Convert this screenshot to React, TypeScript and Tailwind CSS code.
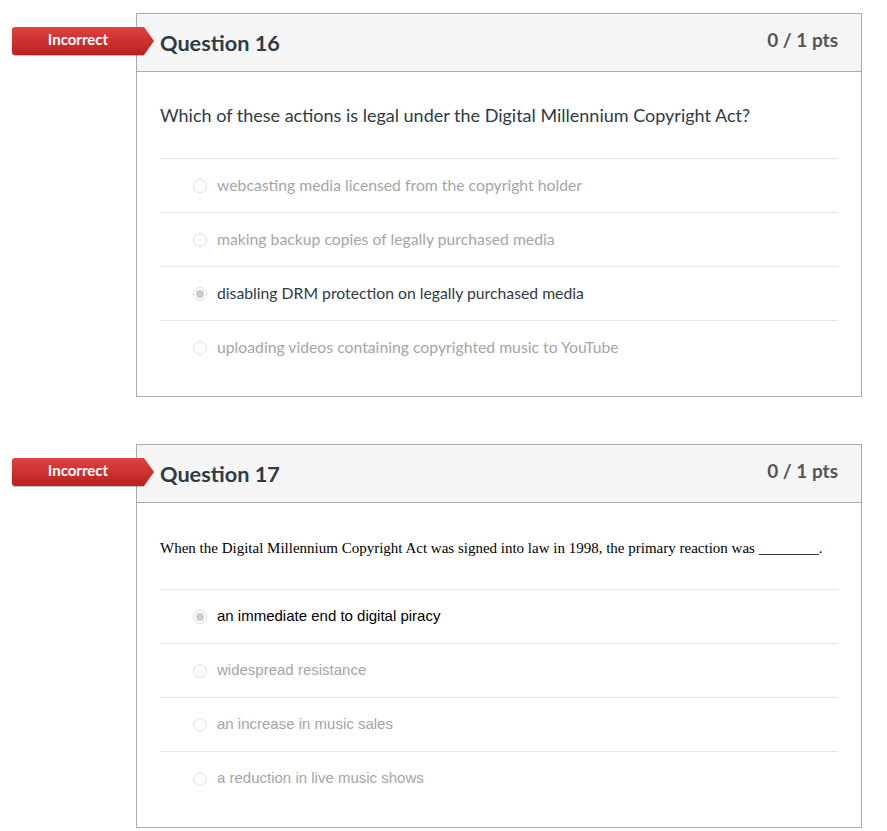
import React from "react";

interface Answer {
  text: string;
  selected?: boolean;
}

interface QuestionProps {
  num: number;
  prompt: string;
  serif?: boolean;
  answers: Answer[];
}

function Radio({ selected }: { selected?: boolean }) {
  return (
    <span className="flex h-[14px] w-[14px] shrink-0 items-center justify-center rounded-full border border-[#e0e0e0] bg-[#fdfdfd]">
      {selected && <span className="h-[8px] w-[8px] rounded-full bg-[#cccccc]" />}
    </span>
  );
}

function Badge() {
  return (
    <div className="absolute left-[12px] top-[14px] flex h-[28px] items-center">
      <div className="flex h-full w-[132px] items-center justify-center rounded-l-[3px] bg-gradient-to-b from-[#e0413f] to-[#b8211f] pb-[3px] font-['Lato'] text-[15px] font-bold text-white shadow-[0_1px_1px_rgba(0,0,0,0.25)]">
        Incorrect
      </div>
      <div className="h-full w-[10px] bg-gradient-to-b from-[#e0413f] to-[#b8211f] [clip-path:polygon(0_0,100%_50%,0_100%)]" />
    </div>
  );
}

function Question({ num, prompt, serif, answers }: QuestionProps) {
  return (
    <div className="relative">
      <Badge />
      <div className="ml-[136px] w-[726px] border border-[#aaaaaa] bg-white">
        <div className="flex h-[58px] items-start justify-between border-b border-[#aaaaaa] bg-[#f5f5f5] pl-[23px] pr-[23px]">
          <h2 className="mt-[15px] font-['Lato'] text-[21.7px] font-bold leading-[28px] text-[#2d3b45]">
            Question {num}
          </h2>
          <span className="mt-[14px] font-['Lato'] text-[19px] font-bold leading-[24px] text-[#555555]">
            0 / 1 pts
          </span>
        </div>
        <div className="px-[23px] pb-[22px]">
          {serif ? (
            <p className="flex h-[86px] items-center pt-[4px] font-['Liberation_Serif'] text-[15px] text-black">
              {prompt}
            </p>
          ) : (
            <p className="flex h-[86px] items-center pt-[1px] font-['Lato'] text-[18px] text-[#2d3b45]">
              {prompt}
            </p>
          )}
          {answers.map((a) => (
            <div
              key={a.text}
              className="flex h-[54px] items-center gap-[10px] border-t border-[#e6e6e6] pl-[33px]"
            >
              <Radio selected={a.selected} />
              <span
                className={`${serif ? "font-['Liberation_Sans'] text-[15px]" : "font-['Lato'] text-[15.75px] pb-[1px]"} ${
                  a.selected ? (serif ? "text-black" : "text-[#2d3b45]") : "text-[#a5a5a5]"
                }`}
              >
                {a.text}
              </span>
            </div>
          ))}
        </div>
      </div>
    </div>
  );
}

export default function App() {
  return (
    <div className="min-h-[831px] w-[887px] bg-white pt-[13px]">
      <div className="flex flex-col gap-[47px]">
        <Question
          num={16}
          prompt="Which of these actions is legal under the Digital Millennium Copyright Act?"
          answers={[
            { text: "webcasting media licensed from the copyright holder" },
            { text: "making backup copies of legally purchased media" },
            { text: "disabling DRM protection on legally purchased media", selected: true },
            { text: "uploading videos containing copyrighted music to YouTube" },
          ]}
        />
        <Question
          num={17}
          serif
          prompt="When the Digital Millennium Copyright Act was signed into law in 1998, the primary reaction was ________."
          answers={[
            { text: "an immediate end to digital piracy", selected: true },
            { text: "widespread resistance" },
            { text: "an increase in music sales" },
            { text: "a reduction in live music shows" },
          ]}
        />
      </div>
    </div>
  );
}
